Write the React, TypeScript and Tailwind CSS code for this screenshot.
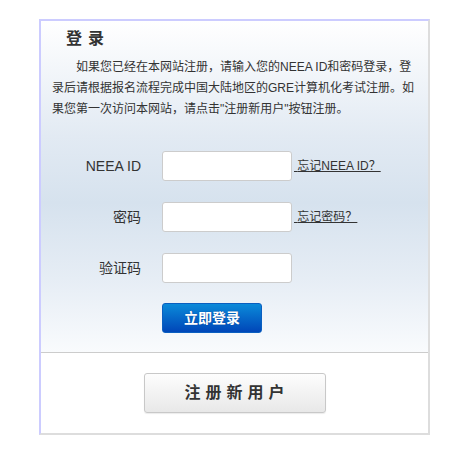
const font = "font-['Liberation_Sans','Noto_Sans_CJK_SC',sans-serif]";

function Field({ label, link }: { label: string; link?: string }) {
  return (
    <div className="flex items-center h-[30px]">
      <div className="w-[100px] text-right text-[14px] text-[#333]">{label}</div>
      <input
        type="text"
        className="ml-[21px] w-[130px] h-[30px] bg-white border border-[#cccccc] rounded-[3px] outline-none"
      />
      {link && (
        <a href="#" className="ml-[2px] text-[12px] text-[#333] underline decoration-[#333]">
          &nbsp;{link}
        </a>
      )}
    </div>
  );
}

export default function App() {
  return (
    <div className={`${font} bg-white w-[449px] h-[451px] pt-[19px] pl-[39px]`}>
      <div className="w-[391px] h-[416px] border-2 border-l-[#ccccff] border-t-[#ccccff] border-r-[#dddddd] border-b-[#dddddd]">
        <div className="h-[332px] border-b border-[#cccccc] bg-[linear-gradient(to_bottom,#ffffff_0%,#e2eaf3_35%,#d6e2ee_55%,#e6edf5_78%,#f9fbfd_100%)]">
          <div className="pt-[8px] pl-[25px] text-[16px] leading-[20px] font-bold tracking-[6px] text-[#333]">登录</div>
          <p className="mt-[8px] ml-[11px] w-[362px] text-[12px] leading-[21px] text-[#333] indent-[24px]">
            如果您已经在本网站注册，请输入您的NEEA ID和密码登录，登录后请根据报名流程完成中国大陆地区的GRE计算机化考试注册。如果您第一次访问本网站，请点击"注册新用户"按钮注册。
          </p>
          <div className="mt-[31px] flex flex-col gap-[21px]">
            <Field label="NEEA ID" link="忘记NEEA ID？" />
            <Field label="密码" link="忘记密码？" />
            <Field label="验证码" />
          </div>
          <button className="mt-[20px] ml-[121px] w-[100px] h-[30px] rounded-[3px] border border-[#0a5fc0] bg-[linear-gradient(to_bottom,#0b8ad9,#0046b8)] text-white text-[14px] font-bold [text-shadow:0_0_1px_#003a90]">
            立即登录
          </button>
        </div>
        <div className="flex justify-center pt-[20px]">
          <button className="w-[182px] h-[40px] rounded-[3px] border border-[#c8c8c8] bg-[linear-gradient(to_bottom,#fdfdfd,#e8e8e8)] shadow-[0_1px_1px_rgba(0,0,0,0.08)] text-[16px] font-bold tracking-[5px] text-[#333] pl-[5px]">
            注册新用户
          </button>
        </div>
      </div>
    </div>
  );
}
